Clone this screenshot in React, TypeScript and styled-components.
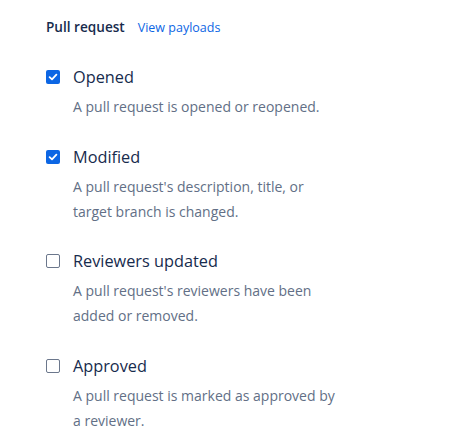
import React from 'react';
import styled, { createGlobalStyle } from 'styled-components';

const Global = createGlobalStyle`
  body {
    margin: 0;
    background: #ffffff;
    font-family: "Open Sans", "Noto Sans", sans-serif;
  }
`;

const events = [
  { title: 'Opened', desc: 'A pull request is opened or reopened.', checked: true },
  { title: 'Modified', desc: "A pull request's description, title, or target branch is changed.", checked: true },
  { title: 'Reviewers updated', desc: "A pull request's reviewers have been added or removed.", checked: false },
  { title: 'Approved', desc: 'A pull request is marked as approved by a reviewer.', checked: false },
];

const Section = styled.section`
  padding: 17px 0 0 46px;
  width: 300px;
`;

const Header = styled.div`
  display: flex;
  align-items: baseline;
  gap: 13px;
  margin-bottom: 27px;
`;

const Heading = styled.h3`
  margin: 0;
  font-size: 13.6px;
  font-weight: 600;
  color: #172b4d;
`;

const Link = styled.a`
  font-size: 12.5px;
  color: #0c66e4;
  text-decoration: none;
`;

const List = styled.div`
  display: flex;
  flex-direction: column;
  gap: 23.5px;
`;

const Row = styled.label`
  display: grid;
  grid-template-columns: 14px 1fr;
  column-gap: 13px;
  cursor: pointer;
`;

const Box = styled.span<{ $checked: boolean }>`
  width: 14px;
  height: 14px;
  box-sizing: border-box;
  margin-top: 7px;
  border-radius: 2px;
  display: flex;
  align-items: center;
  justify-content: center;
  background: ${(p) => (p.$checked ? '#0c66e4' : '#ffffff')};
  border: ${(p) => (p.$checked ? 'none' : '1.5px solid #6b778c')};
`;

const Title = styled.div`
  font-size: 16.3px;
  line-height: 28px;
  color: #172b4d;
`;

const Desc = styled.div`
  grid-column: 2;
  margin-top: 3px;
  font-size: 14px;
  line-height: 25px;
  color: #626f86;
`;

const Check = () => (
  <svg width="10" height="10" viewBox="0 0 10 10">
    <path d="M1.6 5.2 L4 7.4 L8.4 2.6" fill="none" stroke="#fff" strokeWidth="1.8" strokeLinecap="round" strokeLinejoin="round" />
  </svg>
);

export default function App() {
  return (
    <>
      <Global />
      <Section>
        <Header>
          <Heading>Pull request</Heading>
          <Link href="#">View payloads</Link>
        </Header>
        <List>
          {events.map((e) => (
            <Row key={e.title}>
              <Box $checked={e.checked}>{e.checked && <Check />}</Box>
              <Title>{e.title}</Title>
              <Desc>{e.desc}</Desc>
            </Row>
          ))}
        </List>
      </Section>
    </>
  );
}
